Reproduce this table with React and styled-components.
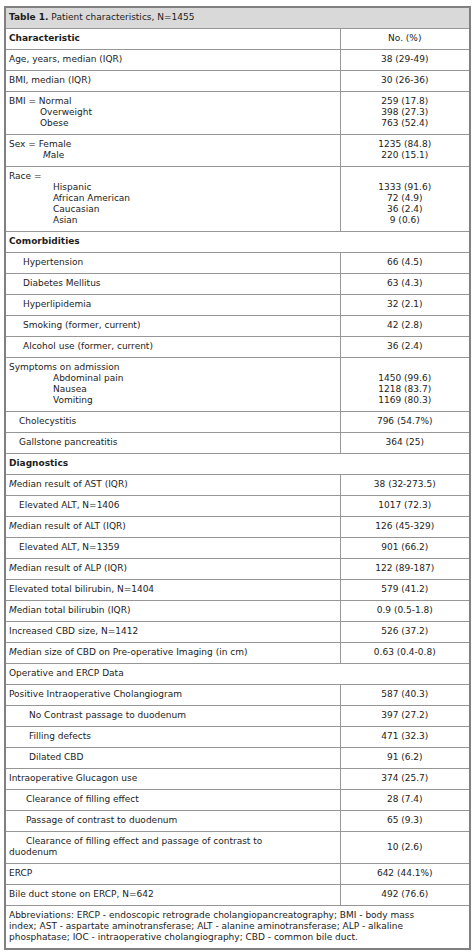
import React from 'react';
import styled, { createGlobalStyle } from 'styled-components';

const GlobalStyle = createGlobalStyle`
  html, body {
    margin: 0;
    padding: 0;
    background: #fff;
  }
  body {
    font-family: "DejaVu Sans", Verdana, sans-serif;
    color: #1c1c1c;
  }
`;

const Page = styled.div`
  padding: 6px 3px 0 4px;
`;

const Table = styled.table`
  width: 467px;
  border-collapse: collapse;
  border: 2px solid #808080;
  font-size: 9px;
  line-height: 11px;
  table-layout: fixed;
`;

const Cell = styled.td`
  border: 1px solid #969696;
  padding: 4px 3px 5px 3px;
  vertical-align: ${(p) => (p.$middle ? 'middle' : 'top')};
  text-align: ${(p) => (p.$center ? 'center' : 'left')};
  font-weight: ${(p) => (p.$bold ? 'bold' : 'normal')};
  background: ${(p) => (p.$shade ? '#d9d9d9' : 'transparent')};
  white-space: ${(p) => (p.$wrap ? 'normal' : 'nowrap')};
`;

const Line = styled.div`
  padding-left: ${(p) => p.$indent || 0}px;
  min-height: 11px;
`;

const Title = styled.span`
  font-weight: bold;
`;

const M = styled.i`
  font-style: italic;
`;

const rows = [
  { kind: 'head', label: ['Characteristic'], value: ['No. (%)'] },
  { label: ['Age, years, median (IQR)'], value: ['38 (29-49)'] },
  { label: ['BMI, median (IQR)'], value: ['30 (26-36)'] },
  {
    label: ['BMI = Normal', ['Overweight', 31], ['Obese', 31]],
    value: ['259 (17.8)', '398 (27.3)', '763 (52.4)'],
  },
  {
    label: ['Sex = Female', [<><M>M</M>ale</>, 34]],
    value: ['1235 (84.8)', '220 (15.1)'],
  },
  {
    label: ['Race =', ['Hispanic', 44], ['African American', 44], ['Caucasian', 44], ['Asian', 44]],
    value: ['', '1333 (91.6)', '72 (4.9)', '36 (2.4)', '9 (0.6)'],
  },
  { kind: 'section', label: ['Comorbidities'], bold: true },
  { label: [['Hypertension', 14]], value: ['66 (4.5)'] },
  { label: [['Diabetes Mellitus', 14]], value: ['63 (4.3)'] },
  { label: [['Hyperlipidemia', 14]], value: ['32 (2.1)'] },
  { label: [['Smoking (former, current)', 14]], value: ['42 (2.8)'] },
  { label: [['Alcohol use (former, current)', 14]], value: ['36 (2.4)'] },
  {
    label: ['Symptoms on admission', ['Abdominal pain', 44], ['Nausea', 44], ['Vomiting', 44]],
    value: ['', '1450 (99.6)', '1218 (83.7)', '1169 (80.3)'],
  },
  { label: [['Cholecystitis', 10]], value: ['796 (54.7%)'] },
  { label: [['Gallstone pancreatitis', 10]], value: ['364 (25)'] },
  { kind: 'section', label: ['Diagnostics'], bold: true },
  { label: [<><M>M</M>edian result of AST (IQR)</>], value: ['38 (32-273.5)'] },
  { label: [['Elevated ALT, N=1406', 10]], value: ['1017 (72.3)'] },
  { label: [<><M>M</M>edian result of ALT (IQR)</>], value: ['126 (45-329)'] },
  { label: [['Elevated ALT, N=1359', 10]], value: ['901 (66.2)'] },
  { label: [<><M>M</M>edian result of ALP (IQR)</>], value: ['122 (89-187)'] },
  { label: ['Elevated total bilirubin, N=1404'], value: ['579 (41.2)'] },
  { label: [<><M>M</M>edian total bilirubin (IQR)</>], value: ['0.9 (0.5-1.8)'] },
  { label: ['Increased CBD size, N=1412'], value: ['526 (37.2)'] },
  { label: [<><M>M</M>edian size of CBD on Pre-operative Imaging (in cm)</>], value: ['0.63 (0.4-0.8)'] },
  { kind: 'section', label: ['Operative and ERCP Data'] },
  { label: ['Positive Intraoperative Cholangiogram'], value: ['587 (40.3)'] },
  { label: [['No Contrast passage to duodenum', 20]], value: ['397 (27.2)'] },
  { label: [['Filling defects', 20]], value: ['471 (32.3)'] },
  { label: [['Dilated CBD', 20]], value: ['91 (6.2)'] },
  { label: ['Intraoperative Glucagon use'], value: ['374 (25.7)'] },
  { label: [['Clearance of filling effect', 17]], value: ['28 (7.4)'] },
  { label: [['Passage of contrast to duodenum', 17]], value: ['65 (9.3)'] },
  {
    label: [['Clearance of filling effect and passage of contrast to', 17], 'duodenum'],
    value: ['10 (2.6)'],
    middle: true,
  },
  { label: ['ERCP'], value: ['642 (44.1%)'] },
  { label: ['Bile duct stone on ERCP, N=642'], value: ['492 (76.6)'] },
];

function Lines({ items }) {
  return items.map((item, i) => {
    const [text, indent] = Array.isArray(item) ? item : [item, 0];
    return (
      <Line key={i} $indent={indent}>
        {text}
      </Line>
    );
  });
}

export default function App() {
  return (
    <Page>
      <GlobalStyle />
      <Table>
        <colgroup>
          <col style={{ width: 335 }} />
          <col />
        </colgroup>
        <tbody>
          <tr>
            <Cell colSpan={2} $shade>
              <Title>Table 1.</Title> Patient characteristics, N=1455
            </Cell>
          </tr>
          {rows.map((row, i) => {
            if (row.kind === 'section') {
              return (
                <tr key={i}>
                  <Cell colSpan={2} $bold={row.bold}>
                    <Lines items={row.label} />
                  </Cell>
                </tr>
              );
            }
            return (
              <tr key={i}>
                <Cell $bold={row.kind === 'head'}>
                  <Lines items={row.label} />
                </Cell>
                <Cell $center $middle={row.middle}>
                  <Lines items={row.value} />
                </Cell>
              </tr>
            );
          })}
          <tr>
            <Cell colSpan={2} $wrap>
              Abbreviations: ERCP - endoscopic retrograde cholangiopancreatography; BMI - body mass
              <br />
              index; AST - aspartate aminotransferase; ALT - alanine aminotransferase; ALP - alkaline
              <br />
              phosphatase; IOC - intraoperative cholangiography; CBD - common bile duct.
            </Cell>
          </tr>
        </tbody>
      </Table>
    </Page>
  );
}
